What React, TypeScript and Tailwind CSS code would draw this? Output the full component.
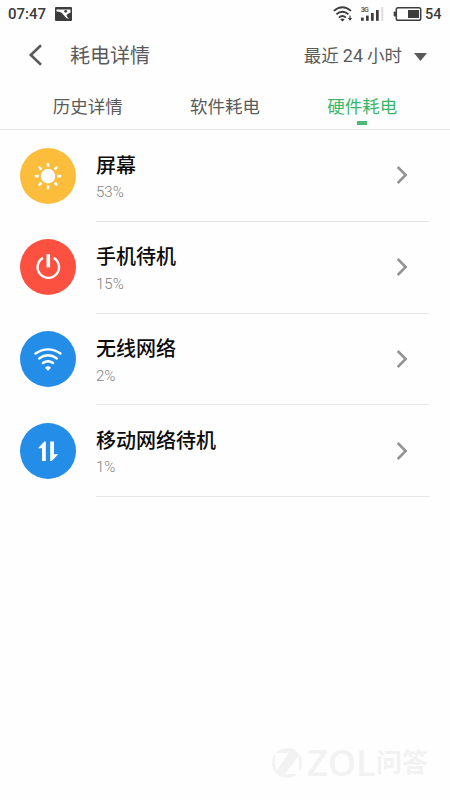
import React from 'react';

const cjk = 'font-[Roboto,"Noto_Sans_CJK_SC",sans-serif]';

function SunIcon() {
  return (
    <svg viewBox="0 0 56 56" className="size-14">
      <circle cx="28" cy="28.1" r="7.3" fill="#fff" />
      {[0, 45, 90, 135, 180, 225, 270, 315].map((a) => (
        <rect key={a} x="26.7" y="15" width="2.6" height="3.8" rx="0.5" fill="#fff" transform={`rotate(${a} 28 28.1)`} />
      ))}
    </svg>
  );
}

function PowerIcon() {
  return (
    <svg viewBox="0 0 56 56" className="size-14" fill="none" stroke="#fff">
      <path d="M23 18.9A10.7 10.7 0 1 0 33.6 18.9" strokeWidth="2.4" />
      <path d="M28.3 15.2V28.4" strokeWidth="3.6" />
    </svg>
  );
}

function WifiIcon() {
  return (
    <svg viewBox="0 0 56 56" className="size-14" fill="none" stroke="#fff" strokeWidth="2.4" strokeLinecap="round">
      <path d="M15.5 22.6Q28 14.2 40.5 22.6" />
      <path d="M19.1 27.4Q28 21.1 36.9 27.4" />
      <path d="M22.9 32Q28 28.4 33.1 32" />
      <path d="M25 36.7Q28 34 31 36.7L28 39.8Z" fill="#fff" stroke="none" />
    </svg>
  );
}

function DataIcon() {
  return (
    <svg viewBox="0 0 56 56" className="size-14" fill="#fff">
      <path d="M18 25.2L24.3 18.6H25.8V38H22V25.2Z" />
      <path d="M30.2 18.6H34V31.2H38.2L31.8 38H30.2Z" />
    </svg>
  );
}

const rows = [
  { name: '屏幕', pct: '53%', bg: 'bg-[#fbbd3b]', icon: <SunIcon /> },
  { name: '手机待机', pct: '15%', bg: 'bg-[#fc5040]', icon: <PowerIcon /> },
  { name: '无线网络', pct: '2%', bg: 'bg-[#248de8]', icon: <WifiIcon /> },
  { name: '移动网络待机', pct: '1%', bg: 'bg-[#248de8]', icon: <DataIcon /> },
];

function StatusBar() {
  return (
    <div className="flex h-7 items-center pl-2 text-[#3a3a3a]">
      <span className="w-[47px] text-[15px] font-medium leading-7">07:47</span>
      <svg width="17" height="14" viewBox="0 0 17 14">
        <rect width="17" height="14" rx="1" fill="#3c3c3c" />
        <path d="M1.5 2.6H15.5V5.4Q12.5 6.2 11.5 8.3Q12 10.5 14.2 12Q10.8 11.5 9 8.6Q6.5 4.4 1.5 4.6Z" fill="#fff" />
        <circle cx="10.7" cy="4.3" r="1.4" fill="#3c3c3c" />
      </svg>
      <div className="flex-1" />
      <svg width="90" height="20" viewBox="0 0 90 20" className="mr-[2px]">
        <g fill="none" stroke="#3c3c3c" strokeWidth="1.8">
          <path d="M.8 6.9Q9.4-.5 18 6.9" />
          <path d="M3.4 10.3Q9.4 5.1 15.4 10.3" />
          <path d="M5.9 13.6Q9.4 10.5 12.9 13.6" />
        </g>
        <path d="M7.3 15.4Q9.4 13.8 11.5 15.4L9.4 17.4Z" fill="#3c3c3c" />
        <path d="M17 11.5V15" stroke="#3c3c3c" strokeWidth="1.2" />
        <path d="M14.8 14H19.2L17 16.8Z" fill="#3c3c3c" />
        <text x="27.7" y="8" fontSize="7" fontFamily="Roboto, sans-serif" fontWeight="500" fill="#4a4a4a" textLength="8">3G</text>
        <g fill="#3c3c3c">
          <rect x="28" y="13.6" width="2.7" height="3.2" />
          <rect x="33" y="11.6" width="2.7" height="5.2" />
          <rect x="38" y="9" width="2.7" height="7.8" />
          <rect x="43" y="6" width="2.7" height="10.8" />
          <rect x="48.3" y="3" width="2" height="13.8" fill="#ddd" />
        </g>
        <rect x="63.3" y="3.8" width="24.4" height="12.4" rx="1.8" fill="none" stroke="#3c3c3c" strokeWidth="1.5" />
        <rect x="75" y="6" width="11" height="8" fill="#3c3c3c" />
        <rect x="60.7" y="7.5" width="2.2" height="5" rx="0.8" fill="#3c3c3c" />
      </svg>
      <span className="w-[25px] pt-px text-[14.5px] font-medium leading-7">54</span>
    </div>
  );
}

export default function App() {
  return (
    <div className={`relative flex h-[800px] w-[450px] flex-col overflow-hidden bg-[#fefefe] ${cjk}`}>
      <StatusBar />
      <header className="flex h-[54px] items-center pl-7 pr-[23px] text-[#5a5a5a]">
        <svg width="16" height="22" viewBox="0 0 16 22" fill="none" stroke="#5a5a5a" strokeWidth="2.6">
          <path d="M13 1.3L2.8 11L13 20.7" />
        </svg>
        <h1 className="ml-[26px] flex-1 pt-[2px] text-[20px] leading-7">耗电详情</h1>
        <span className="mr-3 flex gap-[4px] pt-[2px] text-[17.5px] leading-7">
          <span>最近</span><span className="text-[18px]">24</span><span>小时</span>
        </span>
        <svg width="13" height="8" viewBox="0 0 13 8" className="mt-1">
          <path d="M0 0H13L6.5 8Z" fill="#5a5a5a" />
        </svg>
      </header>
      <nav className="flex h-12 border-b border-[#e6e6e6] px-[19px] text-[17.5px] leading-[26px] text-[#5a5a5a]">
        <span className="flex-1 pt-3 text-center">历史详情</span>
        <span className="flex-1 pt-3 text-center">软件耗电</span>
        <span className="flex flex-1 flex-col items-center pt-3 text-[#38b768]">
          硬件耗电
          <i className="mt-[1px] h-[4px] w-[10px] bg-[#4abb78]" />
        </span>
      </nav>
      <main className="pl-5 pr-[21px] pt-[0.3px]">
        {rows.map((r) => (
          <section key={r.name} className="flex h-[91.7px]">
            <div className={`mt-[17.3px] size-14 shrink-0 rounded-full ${r.bg}`}>{r.icon}</div>
            <div className="ml-5 flex flex-1 border-b border-[#e6e6e6]">
              <div className="flex-1 pt-[21.3px]">
                <h2 className="text-[20px] font-medium leading-7 text-[#0b0b0b]">{r.name}</h2>
                <p className="mt-[2.7px] text-[15px] font-light leading-5 text-[#808080]">{r.pct}</p>
              </div>
              <svg width="12" height="18" viewBox="0 0 12 18" fill="none" stroke="#929292" strokeWidth="2.5" className="mr-[21px] mt-[36.2px]">
                <path d="M1.7 1L9.7 9L1.7 17" />
              </svg>
            </div>
          </section>
        ))}
      </main>
      <div className="absolute left-[271px] top-[743px] flex h-10 items-center text-[#f2f2f2]">
        <svg width="32" height="32" viewBox="0 0 32 32">
          <circle cx="16" cy="16" r="15" fill="#f2f2f2" />
          <path d="M4 6H18L5 24ZM28 8V27H14Z" fill="#fefefe" />
        </svg>
        <span className="ml-[4px] w-[69px] font-['Open_Sans'] text-[36px] font-semibold leading-10">ZOL</span>
        <span className="text-[26px] font-bold leading-10">问答</span>
      </div>
    </div>
  );
}
